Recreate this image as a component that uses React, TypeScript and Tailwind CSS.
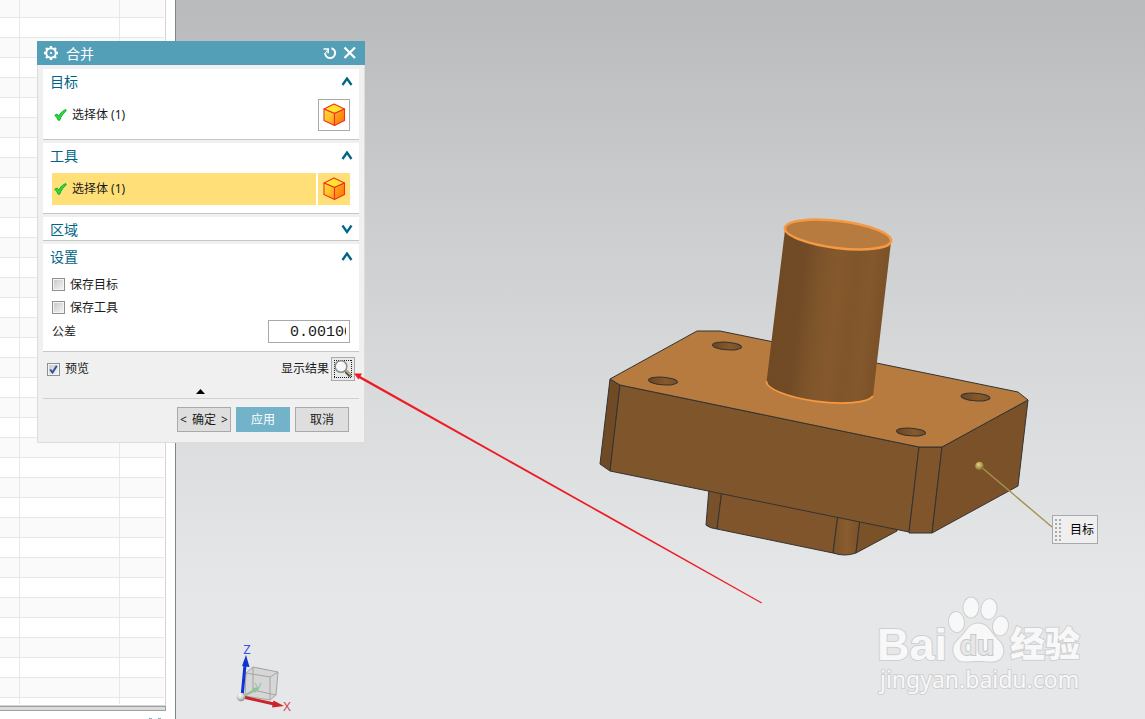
import type { ReactNode } from "react";

const ROWS = 35;

function GearIcon() {
  return (
    <svg width="16" height="16" viewBox="0 0 16 16" fill="none" stroke="white">
      <circle cx="8" cy="8" r="4.8" strokeWidth="2" />
      <circle cx="8" cy="8" r="1.1" fill="white" stroke="none" />
      <path
        d="M8 1v2M8 13v2M1 8h2M13 8h2M3 3l1.4 1.4M11.6 11.6L13 13M3 13l1.4-1.4M11.6 4.4L13 3"
        strokeWidth="2.4"
      />
    </svg>
  );
}

function ResetIcon() {
  return (
    <svg width="14" height="14" viewBox="0 0 14 14" fill="none" stroke="white">
      <path d="M8.5 2.2A5 5 0 1 1 2.1 7.2" strokeWidth="2" />
      <path d="M0.5 3h4.7v4.2" strokeWidth="1.6" />
      <path d="M2.1 7.5L4.8 3.6" strokeWidth="1" />
    </svg>
  );
}

function CloseIcon() {
  return (
    <svg width="14" height="14" viewBox="0 0 14 14" fill="none" stroke="white">
      <path d="M1.5 1.5L12 12M12 1.5L1.5 12" strokeWidth="2.2" />
    </svg>
  );
}

function Chevron({ open }: { open: boolean }) {
  return (
    <svg width="12" height="10" viewBox="0 0 12 10" fill="none" stroke="#006487">
      <path d={open ? "M1.5 8L6 1.5L10.5 8" : "M1.5 0.5L6 7L10.5 0.5"} strokeWidth="2.3" />
    </svg>
  );
}

function CheckIcon() {
  return (
    <svg width="14" height="14" viewBox="0 0 14 14">
      <path
        d="M0.8 7.2L3 6l1.8 2.2C6.3 5 8.3 2.8 11.8 1.5L12.2 3C9 5.4 7.2 8.3 5.7 12.3H4.2C3.4 10.3 2.3 8.8 0.8 7.2z"
        fill="#1fe03c"
        stroke="#0b9a1f"
        strokeWidth="0.8"
      />
    </svg>
  );
}

function BodyIcon() {
  return (
    <svg width="24" height="24" viewBox="0 0 24 24" strokeLinejoin="round">
      <defs>
        <linearGradient id="cubeLeft" x1="0" y1="0" x2="1" y2="1">
          <stop offset="0" stopColor="#ffe83a" />
          <stop offset="1" stopColor="#ff9a1a" />
        </linearGradient>
        <linearGradient id="cubeRight" x1="0" y1="0" x2="1" y2="1">
          <stop offset="0" stopColor="#ffb52a" />
          <stop offset="1" stopColor="#ff6a00" />
        </linearGradient>
      </defs>
      <g stroke="#f0321e" strokeWidth="1.1">
        <path d="M12 1L22.5 6L12.5 10.5L2 6z" fill="#ffe52e" />
        <path d="M2 6L12.5 10.5V22.5L2 17.5z" fill="url(#cubeLeft)" />
        <path d="M22.5 6L12.5 10.5V22.5L22.5 17.5z" fill="url(#cubeRight)" />
      </g>
    </svg>
  );
}

function MagnifierIcon() {
  return (
    <svg width="22" height="22" viewBox="0 0 22 22">
      <path
        d="M2 2.5h18M2 19.5h18M2.5 2v18M19.5 2v18"
        stroke="#222"
        strokeDasharray="1 1"
        shapeRendering="crispEdges"
      />
      <path d="M13 12.5l2 2" stroke="#888" strokeWidth="2" />
      <path d="M14 13.5l4.5 4.5" stroke="#47545f" strokeWidth="3.6" />
      <path d="M14.5 13l4 4" stroke="#e2b545" strokeWidth="1.4" />
      <circle cx="9" cy="8.5" r="5.8" fill="#f6f8fa" stroke="#8d8d8d" strokeWidth="1.5" />
      <path d="M5.7 8A3.3 3.3 0 0 1 9 4.8" stroke="white" strokeWidth="1.4" fill="none" />
    </svg>
  );
}

function Group({ title, open = true, children }: { title: string; open?: boolean; children?: ReactNode }) {
  return (
    <section className="border-b border-[#c6c6c6] bg-white">
      <button
        type="button"
        className="flex h-[23px] w-full items-center justify-between pt-[2px] pr-[6px] pl-[7px] text-sm leading-5 text-[#006487]"
      >
        {title}
        <Chevron open={open} />
      </button>
      {children}
    </section>
  );
}

function SelectRow({ active = false }: { active?: boolean }) {
  return (
    <div className="mt-[7px] mb-2 flex h-8 gap-[2px] px-[9px]">
      <div className={`flex flex-1 items-center gap-1 pl-[2px] ${active ? "bg-[#ffe078]" : ""}`}>
        <CheckIcon />
        <span>选择体 (1)</span>
      </div>
      <button
        type="button"
        aria-label="选择体"
        className={`flex w-8 items-center justify-center border ${active ? "border-[#ffe078] bg-[#ffe078]" : "border-[#a9a9a9] bg-white"}`}
      >
        <BodyIcon />
      </button>
    </div>
  );
}

function Check({ label, checked = false }: { label: string; checked?: boolean }) {
  return (
    <label className="flex h-[23px] items-center gap-[5px]">
      <span className="relative flex h-[13px] w-[13px]">
        <input
          type="checkbox"
          defaultChecked={checked}
          className="peer h-[13px] w-[13px] appearance-none border border-[#8e8f8f] bg-linear-to-br from-[#c4c8cc] to-[#f6f6f6] shadow-[inset_0_0_0_1px_#f4f4f4]"
        />
        <svg
          className="pointer-events-none absolute inset-0 hidden peer-checked:block"
          width="13"
          height="13"
          viewBox="0 0 13 13"
          fill="none"
        >
          <path d="M3.2 6.5L5.5 9.5L9.8 2.8" stroke="#32529c" strokeWidth="2" />
        </svg>
      </span>
      {label}
    </label>
  );
}

function UniteDialog() {
  return (
    <div className="absolute top-[41px] left-[37px] w-[328px] bg-[#f0f0f0] text-xs text-[#1a1a1a]">
      <header className="flex h-6 items-center bg-[#539fb8] pr-2 pl-[6px] text-white">
        <GearIcon />
        <h1 className="flex-1 pt-px pl-[7px] text-sm leading-5">合并</h1>
        <div className="flex gap-[6px]">
          <button type="button" aria-label="重置">
            <ResetIcon />
          </button>
          <button type="button" aria-label="关闭">
            <CloseIcon />
          </button>
        </div>
      </header>

      <div className="border border-t-0 border-[#dcdcdc] px-[5px] pt-1 pb-[10px]">
        <div className="flex flex-col gap-[3px]">
          <Group title="目标">
            <SelectRow />
          </Group>
          <Group title="工具">
            <SelectRow active />
          </Group>
          <Group title="区域" open={false} />
          <Group title="设置">
            <div className="mt-[6px] px-[9px] pb-2">
              <Check label="保存目标" />
              <Check label="保存工具" />
              <div className="mt-px flex h-[23px] items-center justify-between">
                <label htmlFor="tolerance">公差</label>
                <input
                  id="tolerance"
                  type="text"
                  defaultValue="0.001000"
                  className="h-[23px] w-[82px] border border-[#a9a9a9] bg-white pt-[2px] pr-[3px] pl-[21px] font-['Liberation_Mono',monospace] text-[15px]"
                />
              </div>
            </div>
          </Group>
        </div>

        {/* Preview */}
        <div className="mt-[5px] flex h-6 items-center justify-between px-1">
          <Check label="预览" checked />
          <div className="flex items-center gap-[2px]">
            <span>显示结果</span>
            <button
              type="button"
              aria-label="显示结果"
              className="flex h-6 w-6 items-center justify-center border border-[#a9a9a9] bg-[#e9e9e9]"
            >
              <MagnifierIcon />
            </button>
          </div>
        </div>

        <button
          type="button"
          aria-label="折叠"
          className="flex h-[18px] w-full justify-center border-b border-[#d0d0d0] pt-2 pr-px"
        >
          <svg width="9" height="5" viewBox="0 0 9 5" className="fill-black">
            <path d="M4.5 0L9 5H0z" />
          </svg>
        </button>

        {/* Actions */}
        <div className="mt-2 flex justify-end gap-[5px] pr-[10px]">
          <button
            type="button"
            className="flex h-[25px] w-[54px] items-center justify-between border border-[#a9a9a9] bg-[#dedede] px-[2px]"
          >
            <span>&lt;</span>
            <span>确定</span>
            <span>&gt;</span>
          </button>
          <button type="button" className="h-[25px] w-[54px] bg-[#72b3c9] text-white">
            应用
          </button>
          <button type="button" className="h-[25px] w-[54px] border border-[#a9a9a9] bg-[#dedede]">
            取消
          </button>
        </div>
      </div>
    </div>
  );
}

function NavigatorGrid() {
  return (
    <aside className="flex w-44 shrink-0 flex-col overflow-hidden border-r border-[#7b8784] bg-white">
      <div className="min-h-0 w-[166px] flex-1 overflow-hidden border-r border-b border-[#d4d4d4]">
        <table className="w-[164px] table-fixed border-separate border-spacing-0">
          <colgroup>
            <col className="w-5" />
            <col className="w-[100px]" />
            <col />
          </colgroup>
          <tbody>
            {Array.from({ length: ROWS }, (_, i) => (
              <tr key={i} className="h-5 odd:bg-[#fafafa] first:h-[18px]">
                <td className="border-r border-b border-[#e7e7e7] p-0" />
                <td className="border-r border-b border-[#e7e7e7] p-0" />
                <td className="border-b border-[#e7e7e7] p-0" />
              </tr>
            ))}
            <tr className="h-[6px]">
              <td className="border-r border-[#e7e7e7] p-0" />
              <td className="border-r border-[#e7e7e7] p-0" />
              <td className="p-0" />
            </tr>
          </tbody>
        </table>
      </div>
      <div className="h-[5px] w-[166px] border border-l-0 border-[#a0a0a0] bg-[#dcdcdc]" />
      <div className="flex h-2 w-[166px] items-end justify-end gap-[6px] pr-[5px]">
        <span className="h-px w-[3px] bg-[#7fb4c8]" />
        <span className="h-px w-[3px] bg-[#7fb4c8]" />
      </div>
    </aside>
  );
}

function Model() {
  return (
    <svg className="absolute top-0 left-0" width="969" height="719" viewBox="176 0 969 719">
      <defs>
        <linearGradient id="shaft" gradientUnits="userSpaceOnUse" x1="776" y1="300" x2="883" y2="312">
          <stop offset="0" stopColor="#704a25" />
          <stop offset="0.22" stopColor="#714b26" />
          <stop offset="0.36" stopColor="#7d542a" />
          <stop offset="0.55" stopColor="#85592c" />
          <stop offset="0.7" stopColor="#80552a" />
          <stop offset="0.85" stopColor="#84582c" />
          <stop offset="1" stopColor="#7b5129" />
        </linearGradient>
        <linearGradient id="hole" x1="0" x2="1">
          <stop offset="0" stopColor="#6b4521" />
          <stop offset="0.6" stopColor="#87592c" />
          <stop offset="1" stopColor="#75502a" />
        </linearGradient>
        <linearGradient id="corner" x1="0" x2="1">
          <stop offset="0" stopColor="#7a5129" />
          <stop offset="0.5" stopColor="#8a5d2f" />
          <stop offset="1" stopColor="#7a5129" />
        </linearGradient>
        <radialGradient id="handle" cx="0.4" cy="0.35" r="0.7">
          <stop offset="0" stopColor="#e0cf86" />
          <stop offset="0.5" stopColor="#b3a052" />
          <stop offset="1" stopColor="#6e6028" />
        </radialGradient>
        <radialGradient id="ball" cx="0.4" cy="0.3" r="0.8">
          <stop offset="0" stopColor="#fff" />
          <stop offset="0.5" stopColor="#ccc" />
          <stop offset="1" stopColor="#777" />
        </radialGradient>
      </defs>

      <g stroke="#333" strokeWidth="1" strokeLinejoin="round">
        {/* lower boss */}
        <path d="M709 488L706 525Q709 528 717 529L722 490z" fill="#78502a" />
        <path d="M722 490L717 529L833 553L838 514z" fill="#80552b" />
        <path d="M838 514L833 553Q845 557 856 553L860 519z" fill="url(#corner)" />
        <path d="M860 519L856 553L897 531V524z" fill="#7b5128" />

        {/* plate */}
        <path d="M610 379L620 385L610 471L600 464z" fill="#704a25" />
        <path d="M620 385L919 447L909 532L610 471z" fill="#7f552b" />
        <path d="M919 447H942L932 533H909z" fill="#80552b" />
        <path d="M942 447L1028 400L1018 486L932 533z" fill="#7b5129" />
        <path d="M610 379L697 331H720L1018 392L1028 400L942 447H919L620 385z" fill="#b77b3f" />
        <ellipse cx="727" cy="346" rx="14.5" ry="3.8" transform="rotate(4 727 346)" fill="url(#hole)" />
        <ellipse cx="663" cy="381" rx="14.5" ry="3.8" transform="rotate(4 663 381)" fill="url(#hole)" />
        <ellipse cx="975.5" cy="397" rx="14.5" ry="3.8" transform="rotate(4 975.5 397)" fill="url(#hole)" />
        <ellipse cx="911" cy="432" rx="14.5" ry="3.8" transform="rotate(4 911 432)" fill="url(#hole)" />
      </g>

      {/* shaft */}
      <path d="M785 230L766.5 382A54 14 7 0 0 873 396L891 242z" fill="url(#shaft)" />
      <path d="M766.5 381A54 14 7 0 0 873 396" fill="none" stroke="#f59a42" strokeWidth="1.8" />
      <ellipse cx="838" cy="234.5" rx="53.5" ry="13.5" transform="rotate(7 838 234.5)" fill="#b77b3f" stroke="#f59a42" strokeWidth="2.5" />

      <path d="M980 466L1052 527" stroke="#a3944d" strokeWidth="1.4" />
      <circle cx="979.5" cy="466" r="4.3" fill="url(#handle)" />

      {/* view triad */}
      <g stroke="#a4a4a4" strokeWidth="1" fill="#cfcfcf" fillOpacity="0.7">
        <path d="M246 673L253 667L278 672L276 695L270 700L245 696z" />
        <path d="M246 673L270 677L278 672M270 677V700M253 667V690L245 696M253 690L276 695" fill="none" />
      </g>
      <path d="M242 697L255 690" stroke="#96bf9c" strokeWidth="2.5" />
      <path d="M252 688L260 687L255 693z" fill="#96bf9c" />
      <path d="M242 697L245 665" stroke="#1033d4" strokeWidth="3" />
      <path d="M246 655L249.5 667L242 666z" fill="#1033d4" />
      <path d="M243 697L274 704" stroke="#c9242b" strokeWidth="3" />
      <path d="M284 706L272 707.5L273.5 700.5z" fill="#c9242b" />
      <circle cx="241" cy="697" r="4.3" fill="url(#ball)" />
      <g fontFamily="'Noto Sans', sans-serif" fontSize="13" textAnchor="middle">
        <text x="247" y="654" fill="#3450e8">Z</text>
        <text x="287" y="711" fill="#d9454b">X</text>
        <text x="258" y="692" fill="#9bc2a1">Y</text>
      </g>
    </svg>
  );
}

function Watermark() {
  return (
    <svg
      className="absolute right-[45px] bottom-[19px]"
      width="230"
      height="110"
      viewBox="870 590 230 110"
      fill="#f8f8f8"
      stroke="#cfd0d1"
      strokeWidth="2"
      paintOrder="stroke"
    >
      <text x="877" y="660" fontSize="45" fontFamily="'Liberation Sans', sans-serif" fontWeight="700">
        Bai
      </text>
      <ellipse cx="956.5" cy="622" rx="7.5" ry="10" transform="rotate(-8 956.5 622)" />
      <ellipse cx="971" cy="607.5" rx="7.5" ry="10" />
      <ellipse cx="989" cy="609" rx="7.5" ry="10" transform="rotate(10 989 609)" />
      <ellipse cx="1000.5" cy="626" rx="7.5" ry="9.5" transform="rotate(10 1000.5 626)" />
      <path d="M978 623.5C988 623.5 991 633 997 639C1003 644 1005 650 1002 656C998 664 989 661 978 661C967 661 959 664 955 656C952 650 953 644 959 639C966 633 968 623.5 978 623.5z" />
      <text
        x="977"
        y="655"
        textAnchor="middle"
        fontSize="28"
        fontFamily="'Liberation Sans', sans-serif"
        fontWeight="700"
        fill="#e6e7e8"
        stroke="#c6c7c8"
      >
        du
      </text>
      <text x="1010" y="657" fontSize="35" fontFamily="'Noto Sans CJK SC', sans-serif" fontWeight="900">
        经验
      </text>
      <text x="880" y="688" fontSize="23" fontFamily="'Noto Sans', sans-serif">
        jingyan.baidu.com
      </text>
    </svg>
  );
}

export default function App() {
  return (
    <main className="relative flex h-screen overflow-hidden font-['Noto_Sans','Noto_Sans_CJK_SC',sans-serif]">
      <NavigatorGrid />

      <section className="relative min-w-0 flex-1 overflow-hidden bg-[linear-gradient(#b9babc,#cccdcf_30%,#dadbdd_56%,#e6e7e9_83%)]">
        <Model />
        <div className="absolute top-[515px] left-[876px] flex h-[29px] w-[46px] items-center gap-2 border border-[#a9a9a9] bg-[#efefef] pl-[2px] text-xs text-black">
          <svg width="7" height="22" viewBox="0 0 7 22">
            <path d="M1 0v22M5 0v22" stroke="#aaa" strokeWidth="2" strokeDasharray="2 2" />
          </svg>
          <span className="whitespace-nowrap">目标</span>
        </div>
        <Watermark />
      </section>

      <UniteDialog />

      {/* callout arrow */}
      <svg className="pointer-events-none absolute top-0 left-0" width="1145" height="719" viewBox="0 0 1145 719" fill="#ed1c24">
        <path d="M358 374.8L600 511.1L762 602.5L761.5 603.5L599 512.4L357 377z" />
        <path d="M354 373.5L362 373.5L358.5 379.5z" />
      </svg>
    </main>
  );
}
